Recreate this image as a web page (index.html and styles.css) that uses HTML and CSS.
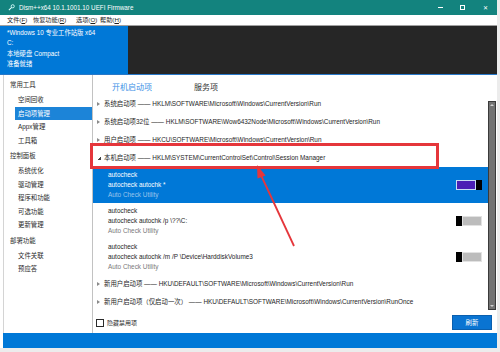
FILE: index.html
```html
<!DOCTYPE html>
<html>
	<head>
		<meta charset="utf-8">
		<title>Dism++</title>
		<link rel="stylesheet" href="styles.css">
	</head>
	<body>
		<div id="win">
			<div class="title">
				<svg class="logo" viewBox="0 0 8 8">
					<circle cx="5.4" cy="2.6" r="1.8" fill="none" stroke="#dff" stroke-width="1"/>
					<path d="M4.2 3.8 L1 7" stroke="#dff" stroke-width="1.2"/>
				</svg>
				<span class="title-text">Dism++x64 10.1.1001.10 UEFI Firmware</span>
				<div class="ctrls">
					<span class="min"><i></i></span>
					<span class="max"><i></i></span>
					<span class="close">✕</span>
				</div>
			</div>
			<ul class="menu">
				<li>文件(<u>F</u>)</li>
				<li>恢复功能(<u>R</u>)</li>
				<li>选项(<u>O</u>)</li>
				<li>帮助(<u>H</u>)</li>
			</ul>
			<div class="info">
				<div class="sys">
					<p>*Windows 10 专业工作站版 x64</p>
					<p>C:</p>
					<p>本地硬盘 Compact</p>
					<p>准备就绪</p>
				</div>
				<div class="dark"></div>
			</div>
			<div class="main">
				<ul class="side">
					<li class="grp">常用工具</li>
					<li>空间回收</li>
					<li class="on">启动项管理</li>
					<li>Appx管理</li>
					<li class="last">工具箱</li>
					<li class="grp">控制面板</li>
					<li>系统优化</li>
					<li>驱动管理</li>
					<li>程序和功能</li>
					<li>可选功能</li>
					<li class="last">更新管理</li>
					<li class="grp">部署功能</li>
					<li>文件关联</li>
					<li>预应答</li>
				</ul>
				<div class="panel">
					<div class="tabs">
						<a class="active">开机启动项</a>
						<a>服务项</a>
					</div>
					<div class="listwrap">
						<div class="list">
							<div class="row"><i class="arr"></i>系统启动项 —— HKLM\SOFTWARE\Microsoft\Windows\CurrentVersion\Run</div>
							<div class="row"><i class="arr"></i>系统启动项32位 —— HKLM\SOFTWARE\Wow6432Node\Microsoft\Windows\CurrentVersion\Run</div>
							<div class="row"><i class="arr"></i>用户启动项 —— HKCU\SOFTWARE\Microsoft\Windows\CurrentVersion\Run</div>
							<div class="row"><i class="arr open"></i>本机启动项 —— HKLM\SYSTEM\CurrentControlSet\Control\Session Manager</div>
							<div class="item sel">
								<div class="txt">
									<p>autocheck</p>
									<p>autocheck autochk *</p>
									<p class="desc">Auto Check Utility</p>
								</div>
								<span class="tog on"><b></b></span>
							</div>
							<div class="item">
								<div class="txt">
									<p>autocheck</p>
									<p>autocheck autochk /p \??\C:</p>
									<p class="desc">Auto Check Utility</p>
								</div>
								<span class="tog"><b></b></span>
							</div>
							<div class="item">
								<div class="txt">
									<p>autocheck</p>
									<p>autocheck autochk /m /P \Device\HarddiskVolume3</p>
									<p class="desc">Auto Check Utility</p>
								</div>
								<span class="tog"><b></b></span>
							</div>
							<div class="row"><i class="arr"></i>新用户启动项 —— HKU\DEFAULT\SOFTWARE\Microsoft\Windows\CurrentVersion\Run</div>
							<div class="row"><i class="arr"></i>新用户启动项（仅启动一次） —— HKU\DEFAULT\SOFTWARE\Microsoft\Windows\CurrentVersion\RunOnce</div>
						</div>
						<div class="scroll">
							<i class="up"></i>
							<i class="down"></i>
						</div>
					</div>
					<div class="bottom">
						<label class="chk"><span class="box"></span>隐藏禁用项</label>
						<button class="refresh">刷新</button>
					</div>
				</div>
			</div>
			<div class="foot"></div>
		</div>
		<svg class="mark" width="500" height="352">
			<rect x="91.5" y="144.5" width="346" height="23" fill="none" stroke="#e5363b" stroke-width="3"/>
			<line x1="260" y1="173" x2="294" y2="246" stroke="#e5363b" stroke-width="1.8"/>
			<polygon points="257,165 265.5,175.5 257.5,178.5" fill="#e5363b"/>
		</svg>
	</body>
</html>
```

FILE: styles.css
```css
* {
	margin: 0;
	padding: 0;
	box-sizing: border-box;
}
ul {
	list-style: none;
}
body {
	position: relative;
	background: #ececec;
	font-family: "Liberation Sans", "Noto Sans CJK SC", sans-serif;
	font-size: 6.4px;
	color: #1e1e1e;
}
#win {
	width: 497px;
	background: #fff;
}
.title {
	height: 15px;
	display: flex;
	align-items: center;
	padding-left: 8px;
	background: #13837e;
	color: #fff;
}
.logo {
	width: 7px;
	height: 7px;
	margin-right: 4px;
}
.title-text {
	font-size: 6.3px;
}
.ctrls {
	margin-left: auto;
	display: flex;
	height: 15px;
}
.ctrls span {
	display: flex;
	align-items: center;
	justify-content: center;
	width: 22px;
}
.ctrls .close {
	width: 24px;
	font-size: 6px;
}
.min i {
	width: 5px;
	border-top: 1px solid #fff;
}
.max i {
	width: 5px;
	height: 5px;
	border: 1px solid #fff;
}
.menu {
	height: 11px;
	display: grid;
	grid-template-columns: 26px 43px 24px auto;
	padding-left: 7px;
	line-height: 10px;
	border-bottom: 1px solid #a0a0a0;
	background: #fff;
	font-size: 6.2px;
}
.info {
	height: 49px;
	display: flex;
	border-bottom: 1px solid #2878c8;
}
.sys {
	width: 128px;
	padding: 2px 0 0 7px;
	background: #0078d7;
	color: #fff;
	font-size: 6.3px;
	line-height: 10.3px;
}
.dark {
	flex: 1;
	background: #262626;
}
.main {
	height: 258px;
	display: flex;
	margin-left: 3px;
}
.side {
	width: 90px;
	padding-top: 3px;
	border-left: 1px solid #d4d4d4;
	border-right: 1px solid #c2c2c2;
	background: #fff;
	line-height: 13.5px;
	color: #2a2a2a;
}
.side li {
	margin: 0 0 0 11px;
	padding-left: 3px;
}
.side .grp {
	margin: 2px 0 1px;
	padding-left: 6px;
	line-height: 14px;
}
.side .grp:first-child {
	margin-top: 0;
}
.side .on {
	background: #1c84d8;
	color: #fff;
}
.panel {
	flex: 1;
	display: flex;
	flex-direction: column;
}
.tabs {
	height: 20px;
	padding: 7.5px 0 0 19px;
	display: flex;
	gap: 42px;
	font-size: 8px;
	line-height: 10px;
	color: #333;
}
.tabs .active {
	color: #3b8fe6;
}
.listwrap {
	height: 217px;
	display: flex;
}
.list {
	flex: 1;
	overflow: hidden;
	white-space: nowrap;
}
.row {
	height: 18px;
	line-height: 18px;
	padding-left: 4px;
	display: flex;
	align-items: center;
}
.arr {
	width: 0;
	height: 0;
	margin: 0 4px 0 0;
	border-left: 3px solid #8a8a8a;
	border-top: 2.5px solid transparent;
	border-bottom: 2.5px solid transparent;
}
.arr.open {
	width: 4px;
	height: 4px;
	margin-right: 3px;
	border: none;
	background: linear-gradient(to top left, #444 50%, transparent 50%);
}
.item {
	height: 36px;
	display: flex;
	align-items: center;
	padding: 0 6px 0 15px;
	line-height: 10px;
}
.item .txt {
	flex: 1;
}
.item .desc {
	color: #7a7a7a;
}
.item.sel {
	background: #0078d7;
	color: #fff;
}
.item.sel .desc {
	color: #9cc4ec;
}
.tog {
	width: 26px;
	height: 10px;
	display: flex;
	align-items: center;
}
.tog b {
	width: 6px;
	height: 10px;
	background: #000;
}
.tog::after {
	content: "";
	flex: 1;
	height: 8px;
	background: #bcbcbc;
	border: 1px solid #e2e2e2;
}
.tog.on {
	flex-direction: row-reverse;
}
.tog.on::after {
	background: #4b1fb5;
	border-color: #c9dcf4;
}
.scroll {
	width: 8px;
	margin: 6px 1px 2px 0;
	display: flex;
	flex-direction: column;
	justify-content: space-between;
	align-items: center;
	padding: 2px 0;
	background: #727272;
	border: 1px solid #3a3a3a;
}
.scroll i {
	width: 0;
	height: 0;
	border-left: 2px solid transparent;
	border-right: 2px solid transparent;
}
.scroll .up {
	border-bottom: 2px solid #d0d0d0;
}
.scroll .down {
	border-top: 2px solid #d0d0d0;
}
.bottom {
	flex: 1;
	display: flex;
	align-items: center;
	justify-content: space-between;
	padding: 0 5px 0 3px;
}
.chk {
	display: flex;
	align-items: center;
	font-size: 6px;
}
.box {
	width: 8px;
	height: 8px;
	margin-right: 3px;
	border: 1.2px solid #2a2a2a;
	background: #fff;
}
.refresh {
	width: 40px;
	height: 15px;
	border: 1px solid #0a5fae;
	background: #0a74d2;
	color: #fff;
	font-family: inherit;
	font-size: 6.4px;
}
.foot {
	height: 15px;
	margin-left: 3px;
	background: #0078d7;
}
.mark {
	position: absolute;
	left: 0;
	top: 0;
	pointer-events: none;
}
```
